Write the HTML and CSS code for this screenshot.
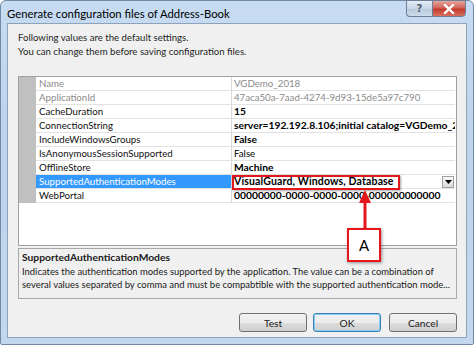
FILE: index.html
```html
<!DOCTYPE html>
<html>
<head>
<meta charset="utf-8">
<link rel="stylesheet" href="styles.css">
</head>
<body>
<div class="window">
  <div class="titlebar">
    <div class="title">Generate configuration files of Address-Book</div>
    <div class="caption-buttons">
      <div class="cbtn help">?</div>
      <div class="cbtn close">
        <svg width="12" height="10" viewBox="0 0 12 10"><path d="M2 1 L10 9 M10 1 L2 9" stroke="#fff" stroke-width="2.4" stroke-linecap="square"/></svg>
      </div>
    </div>
  </div>
  <div class="client">
    <div class="intro">
      <div>Following values are the default settings.</div>
      <div>You can change them before saving configuration files.</div>
    </div>
    <div class="grid">
      <div class="rows">
        <div class="row"><div class="gut"></div><div class="name ro">Name</div><div class="val ro">VGDemo_2018</div></div>
        <div class="row"><div class="gut"></div><div class="name ro">ApplicationId</div><div class="val ro">47aca50a-7aad-4274-9d93-15de5a97c790</div></div>
        <div class="row"><div class="gut"></div><div class="name">CacheDuration</div><div class="val b">15</div></div>
        <div class="row"><div class="gut"></div><div class="name">ConnectionString</div><div class="val b">server=192.192.8.106;initial catalog=VGDemo_2018</div></div>
        <div class="row"><div class="gut"></div><div class="name">IncludeWindowsGroups</div><div class="val b">False</div></div>
        <div class="row"><div class="gut"></div><div class="name">IsAnonymousSessionSupported</div><div class="val">False</div></div>
        <div class="row"><div class="gut"></div><div class="name">OfflineStore</div><div class="val b">Machine</div></div>
        <div class="row sel"><div class="gut"></div><div class="name">SupportedAuthenticationModes</div><div class="val b"><span class="wide">VisualGuard, Windows, Database</span><span class="dd"><svg width="7" height="4" viewBox="0 0 7 4"><path d="M0 0 H7 L3.5 4 Z" fill="#000"/></svg></span></div></div>
        <div class="row"><div class="gut"></div><div class="name">WebPortal</div><div class="val b">00000000-0000-0000-0000-000000000000</div></div>
      </div>
    </div>
    <div class="desc">
      <div class="desc-title">SupportedAuthenticationModes</div>
      <div class="desc-text">Indicates the authentication modes supported by the application. The value can be a combination of several values separated by comma and must be compabtible with the supported authentication mode...</div>
    </div>
    <div class="buttons">
      <div class="btn">Test</div>
      <div class="btn default">OK</div>
      <div class="btn">Cancel</div>
    </div>
  </div>
  <div class="hl-rect"></div>
  <svg class="arrow" width="16" height="40" viewBox="0 0 16 40"><path d="M8 0 L14 13 L9.5 13 L9.5 40 L6.5 40 L6.5 13 L2 13 Z" fill="#e3161b"/></svg>
  <div class="callout">A</div>
</div>
</body>
</html>
```
FILE: styles.css
```css
html, body {
  margin: 0;
  padding: 0;
  background: #ffffff;
}
body {
  width: 474px;
  height: 347px;
  overflow: hidden;
  font-family: Lato, "Noto Sans", sans-serif;
  font-size: 9.7px;
  color: #000;
}
.window {
  position: relative;
  box-sizing: border-box;
  width: 474px;
  height: 345px;
  border: 1px solid #6f8aa6;
  border-radius: 6px 6px 2px 2px;
  background: linear-gradient(to bottom, #c7dcf2 0%, #bcd3ec 40%, #c3d8ee 100%);
  display: flex;
  flex-direction: column;
}
.titlebar {
  height: 22px;
  display: flex;
  justify-content: space-between;
  align-items: flex-start;
  flex: none;
}
.title {
  padding: 6px 0 0 6px;
  font-size: 11.3px;
  line-height: 13px;
  color: #000;
}
.caption-buttons {
  display: flex;
  margin-right: 7px;
  margin-top: -1px;
}
.cbtn {
  height: 17px;
  display: flex;
  align-items: center;
  justify-content: center;
  border: 1px solid #6d7f95;
  box-sizing: border-box;
}
.help {
  width: 26px;
  border-radius: 0 0 0 4px;
  border-right: none;
  background: linear-gradient(to bottom, #e6eef7, #c8d6e6 50%, #b8c9dc 51%, #cddbe9);
  color: #4b5c70;
  font-family: "DejaVu Sans", sans-serif;
  font-size: 10px;
  font-weight: bold;
}
.close {
  width: 34px;
  border-radius: 0 0 4px 0;
  background: linear-gradient(to bottom, #e6a59c, #d1665a 45%, #c23b2c 55%, #d8705f);
}
.client {
  margin: 0 6px;
  height: 315px;
  background: #f0f0f0;
  border: 1px solid #8ea3b9;
  box-sizing: border-box;
  display: flex;
  flex-direction: column;
  padding: 0 9px 0 10px;
}
.intro {
  padding-top: 7px;
  line-height: 14px;
  color: #1e1e1e;
  font-size: 9.6px;
}
.grid {
  margin-top: 17px;
  height: 170px;
  border: 1px solid #a0a0a0;
  background: #fff;
  box-sizing: border-box;
  display: flex;
  flex-direction: column;
  flex: none;
}
.rows {
  display: flex;
  flex-direction: column;
}
.row {
  display: flex;
  height: 14px;
  line-height: 13px;
}
.gut {
  width: 17px;
  flex: none;
  background: #c0c0c0;
}
.name {
  width: 192px;
  flex: none;
  padding-left: 3px;
  border-right: 1px solid #d8d8d8;
  border-bottom: 1px solid #e2e2e2;
  white-space: nowrap;
  overflow: hidden;
  color: #111;
}
.val {
  flex: 1;
  min-width: 0;
  padding-left: 2px;
  border-bottom: 1px solid #e2e2e2;
  white-space: nowrap;
  overflow: hidden;
  display: flex;
  align-items: center;
  justify-content: space-between;
  margin-right: 1px;
}
.ro { color: #8a8a8a; }
.b { font-weight: bold; font-size: 10.3px; }
.wide { letter-spacing: 0.15px; font-size: 10.5px; }
.sel .name {
  background: #3399ff;
  color: #fff;
}
.dd {
  width: 12px;
  height: 12px;
  box-sizing: border-box;
  border: 1px solid #a0a0a0;
  background: linear-gradient(to bottom, #f7f7f7, #dcdcdc);
  display: flex;
  align-items: center;
  justify-content: center;
  margin-right: 1px;
  flex: none;
}
.desc {
  margin-top: 2px;
  height: 51px;
  border: 1px solid #a8a8a8;
  box-sizing: border-box;
  background: #f0f0f0;
  padding: 2px 1px 0 3px;
  line-height: 13.5px;
  color: #1a1a1a;
  flex: none;
}
.desc-title {
  font-weight: bold;
  font-size: 10.3px;
}
.desc-text {
  font-size: 9.45px;
}
.buttons {
  display: flex;
  justify-content: flex-end;
  gap: 6px;
  margin-top: 14px;
}
.btn {
  width: 68px;
  height: 19px;
  box-sizing: border-box;
  border: 1px solid #707070;
  border-radius: 3px;
  background: linear-gradient(to bottom, #f2f2f2 0%, #ebebeb 50%, #dddddd 51%, #cfcfcf 100%);
  display: flex;
  align-items: center;
  justify-content: center;
  color: #1a1a1a;
  font-size: 10.2px;
}
.btn.default {
  border-color: #3c7fb1;
  box-shadow: inset 0 0 0 1px #7fd0f5;
  margin-right: 2px;
}
.hl-rect {
  position: absolute;
  left: 231px;
  top: 174px;
  width: 168px;
  height: 15px;
  border: 2px solid #e3161b;
  box-sizing: border-box;
  box-shadow: 1px 1px 2px rgba(0,0,0,0.35);
}
.arrow {
  position: absolute;
  left: 356px;
  top: 189px;
}
.callout {
  position: absolute;
  left: 346px;
  top: 227px;
  width: 34px;
  height: 34px;
  box-sizing: border-box;
  border: 2px solid #e3161b;
  background: #fff;
  box-shadow: 1px 1px 3px rgba(0,0,0,0.4);
  display: flex;
  align-items: center;
  justify-content: center;
  font-size: 15px;
  color: #000;
}
```
